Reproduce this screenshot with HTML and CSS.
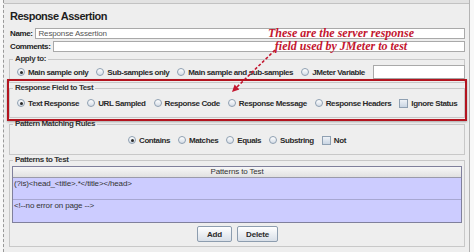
FILE: index.html
```html
<!DOCTYPE html>
<html lang="en">
<head>
  <meta charset="UTF-8">
  <title>Response Assertion</title>
  <link rel="stylesheet" href="styles.css">
</head>
<body>
<div class="frame">
  <div class="tabs"></div>
  <h1 class="title">Response Assertion</h1>

  <div class="field-row">
    <label>Name:</label>
    <div class="input">Response Assertion</div>
  </div>
  <div class="field-row second">
    <label>Comments:</label>
    <div class="input"></div>
  </div>

  <fieldset class="group apply">
    <legend>Apply to:</legend>
    <div class="options">
      <span class="opt"><span class="radio on"></span>Main sample only</span>
      <span class="opt"><span class="radio"></span>Sub-samples only</span>
      <span class="opt"><span class="radio"></span>Main sample and sub-samples</span>
      <span class="opt"><span class="radio"></span>JMeter Variable</span>
      <div class="var-input"></div>
    </div>
  </fieldset>

  <fieldset class="group field">
    <legend>Response Field to Test</legend>
    <div class="options">
      <span class="opt"><span class="radio on"></span>Text Response</span>
      <span class="opt"><span class="radio"></span>URL Sampled</span>
      <span class="opt"><span class="radio"></span>Response Code</span>
      <span class="opt"><span class="radio"></span>Response Message</span>
      <span class="opt"><span class="radio"></span>Response Headers</span>
      <span class="opt"><span class="check"></span>Ignore Status</span>
    </div>
  </fieldset>

  <fieldset class="group rules">
    <legend>Pattern Matching Rules</legend>
    <div class="options">
      <span class="opt"><span class="radio on"></span>Contains</span>
      <span class="opt"><span class="radio"></span>Matches</span>
      <span class="opt"><span class="radio"></span>Equals</span>
      <span class="opt"><span class="radio"></span>Substring</span>
      <span class="opt"><span class="check"></span>Not</span>
    </div>
  </fieldset>

  <fieldset class="group patterns">
    <legend>Patterns to Test</legend>
    <div class="table">
      <div class="thead">Patterns to Test</div>
      <div class="row">(?is)&lt;head_&lt;title&gt;.*&lt;/title&gt;&lt;/head&gt;</div>
      <div class="row">&lt;!--no error on page --&gt;</div>
    </div>
    <div class="buttons">
      <button class="btn add">Add</button>
      <button class="btn delete">Delete</button>
    </div>
  </fieldset>

  <!-- annotation drawn over the screenshot -->
  <div class="highlight"></div>
  <div class="note">These are the server response<br>field used by JMeter to test</div>
  <svg class="arrow" width="52" height="50" viewBox="0 0 52 50">
    <line x1="47" y1="4" x2="9" y2="41" stroke="#c3162f" stroke-width="1.6" stroke-dasharray="3 2"/>
    <polygon points="4,46 11.4,43.6 6.6,38.6" fill="#c3162f"/>
  </svg>
</div>
</body>
</html>
```

FILE: styles.css
```css
body {
  margin: 0;
  background: #f8f8f8;
  font-family: "Liberation Sans", Arial, sans-serif;
  font-size: 8px;
  letter-spacing: -0.4px;
  color: #222;
}

.frame {
  position: relative;
  margin-left: 3px;
  width: 467px;
  height: 252px;
  box-sizing: border-box;
  border-left: 1px dashed #9a9a9a;
  border-right: 1px solid #b4b4b4;
  background: #eeeeee;
  overflow: hidden;
}

.tabs {
  height: 3px;
  background: #e2e2e2;
  border-bottom: 1px solid #c2c2c2;
}

.title {
  margin: 5px 0 0 6px;
  font-size: 11px;
  line-height: 14px;
  letter-spacing: -0.5px;
  font-weight: bold;
  color: #1e1e1e;
}

.field-row {
  display: flex;
  align-items: center;
  gap: 3px;
  height: 11px;
  margin: 5px 4px 0 6px;
  font-weight: bold;
}
.field-row.second {
  margin-top: 2px;
}
.input {
  flex: 1;
  height: 11px;
  box-sizing: border-box;
  border: 1px solid #a9a9a9;
  background: #fff;
  padding-left: 2px;
  line-height: 9px;
  font-weight: normal;
  letter-spacing: -0.15px;
  color: #555;
}

.group {
  margin: 0 4px 0 5px;
  padding: 0 2px 4px;
  border: 1px solid #c8c8c8;
  min-width: 0;
}
.group legend {
  margin-left: 1px;
  padding: 0 2px;
  line-height: 10px;
  font-weight: bold;
  color: #333;
}
.group.apply {
  margin-top: 2px;
  padding-bottom: 3px;
}
.group.field {
  padding-bottom: 8px;
}
.group.rules {
  margin-top: 1px;
  padding-bottom: 8px;
}

.options {
  display: flex;
  align-items: center;
  height: 12px;
  padding-left: 5px;
  font-weight: bold;
  color: #2a2a2a;
  white-space: nowrap;
}
.apply .options {
  height: 14px;
  margin-top: 1px;
}
.field .options {
  margin-top: 4px;
}
.rules .options {
  margin-top: 5px;
  padding-left: 116px;
}
.opt {
  display: flex;
  align-items: center;
  gap: 3px;
  margin-right: 8px;
}

.radio {
  display: grid;
  place-items: center;
  width: 8px;
  height: 8px;
  box-sizing: border-box;
  border: 1px solid #8fa0b2;
  border-radius: 50%;
  background: linear-gradient(#ffffff, #d4dce6);
}
.radio.on::after {
  content: "";
  width: 3px;
  height: 3px;
  border-radius: 50%;
  background: #2b2b2b;
}
.check {
  width: 9px;
  height: 9px;
  box-sizing: border-box;
  border: 1px solid #8fa0b2;
  background: linear-gradient(#eef2f7, #c9d5e3);
}

.var-input {
  flex-shrink: 0;
  margin-left: auto;
  width: 92px;
  height: 14px;
  box-sizing: border-box;
  border: 1px solid #a9a9a9;
  background: #fff;
}

.table {
  margin-top: 1px;
  border: 1px solid #80809c;
  background: #ccccff;
  letter-spacing: -0.15px;
}
.thead {
  height: 10px;
  line-height: 10px;
  text-align: center;
  background: linear-gradient(#f7f7f7, #e1e1e1);
  border-bottom: 1px solid #9a9aaa;
  color: #333;
}
.row {
  height: 22px;
  box-sizing: border-box;
  padding: 1px 0 0 1px;
  line-height: 9px;
  border-bottom: 1px solid #a7a7d2;
  color: #333;
}
.row:last-child {
  border-bottom: none;
}

.buttons {
  display: flex;
  justify-content: center;
  gap: 5px;
  margin-top: 3px;
  padding-left: 1px;
}
.btn {
  height: 16px;
  padding: 0;
  border: 1px solid #8d9daf;
  border-radius: 2px;
  background: linear-gradient(#ffffff, #d8dfe8);
  font-family: inherit;
  font-size: 8px;
  letter-spacing: -0.2px;
  font-weight: bold;
  color: #2a2a2a;
}
.btn.add {
  width: 35px;
}
.btn.delete {
  width: 41px;
}

.highlight {
  position: absolute;
  left: 3px;
  top: 79px;
  width: 460px;
  height: 42px;
  box-sizing: border-box;
  border: 2px solid #b3141f;
  box-shadow: 0 1px 2px rgba(0, 0, 0, 0.3);
}
.note {
  position: absolute;
  left: 250px;
  top: 27px;
  width: 174px;
  text-align: center;
  font-family: "Liberation Serif", serif;
  font-style: italic;
  font-weight: bold;
  font-size: 12px;
  line-height: 13px;
  letter-spacing: 0;
  color: #c3162f;
  white-space: nowrap;
}
.arrow {
  position: absolute;
  left: 224px;
  top: 46px;
}
```
